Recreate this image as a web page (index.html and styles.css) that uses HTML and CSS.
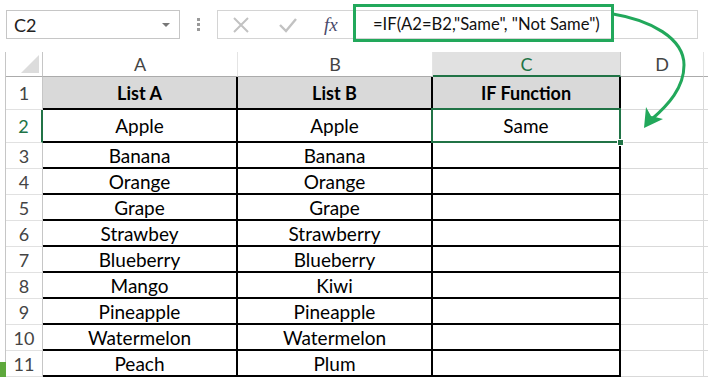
FILE: index.html
```html
<!DOCTYPE html>
<html lang="en">
<head>
  <meta charset="UTF-8">
  <title>IF Function</title>
  <link rel="stylesheet" href="styles.css">
</head>
<body>
  <div class="toolbar">
    <div class="name-box">
      <span>C2</span>
      <span class="drop"></span>
    </div>
    <div class="grip"><i></i><i></i><i></i></div>
    <div class="buttons">
      <svg class="btn" width="18" height="18" viewBox="0 0 18 18">
        <path d="M2 2 L16 16 M16 2 L2 16" stroke="#c2c2c2" stroke-width="2" fill="none"/>
      </svg>
      <svg class="btn" width="20" height="18" viewBox="0 0 20 18">
        <path d="M2 9 L8 15 L18 3" stroke="#c2c2c2" stroke-width="2.4" fill="none"/>
      </svg>
      <span class="fx">fx</span>
    </div>
    <div class="formula">=IF(A2=B2,"Same", "Not Same")</div>
  </div>

  <div class="sheet">
    <div class="cell corner"><span class="tri"></span></div>
    <div class="cell ch">A</div>
    <div class="cell ch">B</div>
    <div class="cell ch active">C</div>
    <div class="cell ch">D</div>
    <div class="cell ch last"></div>

    <div class="cell rh">1</div>
    <div class="cell t head">List A</div>
    <div class="cell t head">List B</div>
    <div class="cell t head">IF Function</div>
    <div class="cell"></div>
    <div class="cell last"></div>

    <div class="cell rh active">2</div>
    <div class="cell t">Apple</div>
    <div class="cell t">Apple</div>
    <div class="cell t selected">Same<span class="sel"><span class="handle"></span></span></div>
    <div class="cell"></div>
    <div class="cell last"></div>

    <div class="cell rh">3</div>
    <div class="cell t">Banana</div>
    <div class="cell t">Banana</div>
    <div class="cell t"></div>
    <div class="cell"></div>
    <div class="cell last"></div>

    <div class="cell rh">4</div>
    <div class="cell t">Orange</div>
    <div class="cell t">Orange</div>
    <div class="cell t"></div>
    <div class="cell"></div>
    <div class="cell last"></div>

    <div class="cell rh">5</div>
    <div class="cell t">Grape</div>
    <div class="cell t">Grape</div>
    <div class="cell t"></div>
    <div class="cell"></div>
    <div class="cell last"></div>

    <div class="cell rh">6</div>
    <div class="cell t">Strawbey</div>
    <div class="cell t">Strawberry</div>
    <div class="cell t"></div>
    <div class="cell"></div>
    <div class="cell last"></div>

    <div class="cell rh">7</div>
    <div class="cell t">Blueberry</div>
    <div class="cell t">Blueberry</div>
    <div class="cell t"></div>
    <div class="cell"></div>
    <div class="cell last"></div>

    <div class="cell rh">8</div>
    <div class="cell t">Mango</div>
    <div class="cell t">Kiwi</div>
    <div class="cell t"></div>
    <div class="cell"></div>
    <div class="cell last"></div>

    <div class="cell rh">9</div>
    <div class="cell t">Pineapple</div>
    <div class="cell t">Pineapple</div>
    <div class="cell t"></div>
    <div class="cell"></div>
    <div class="cell last"></div>

    <div class="cell rh">10</div>
    <div class="cell t">Watermelon</div>
    <div class="cell t">Watermelon</div>
    <div class="cell t"></div>
    <div class="cell"></div>
    <div class="cell last"></div>

    <div class="cell rh">11</div>
    <div class="cell t">Peach</div>
    <div class="cell t">Plum</div>
    <div class="cell t"></div>
    <div class="cell"></div>
    <div class="cell last"></div>
  </div>

  <!-- annotation: box round the formula and arrow to C2 -->
  <div class="callout"></div>
  <svg class="arrow" width="708" height="377" viewBox="0 0 708 377">
    <path d="M613 14 C650 20 684 38 684 65 C684 88 668 105 652 119" stroke="#22a85b" stroke-width="3" fill="none"/>
    <polygon points="644,128 646,107 651,116 663,119" fill="#22a85b"/>
  </svg>
  <div class="tab"></div>
</body>
</html>
```

FILE: styles.css
```css
* {
  box-sizing: border-box;
}

body {
  margin: 0;
  background: #fff;
  font-family: 'Lato', 'Open Sans', sans-serif;
  color: #000;
  overflow: hidden;
  position: relative;
  width: 708px;
  height: 377px;
}

/* formula bar */
.toolbar {
  display: flex;
  align-items: stretch;
  height: 29px;
  margin: 10px 0 13px 6px;
}

.name-box {
  width: 174px;
  border: 1px solid #c6c6c6;
  display: flex;
  align-items: center;
  justify-content: space-between;
  padding: 0 9px 0 7px;
  font-size: 18px;
  color: #222;
}

.drop {
  width: 0;
  height: 0;
  border-left: 4px solid transparent;
  border-right: 4px solid transparent;
  border-top: 4px solid #777;
}

.grip {
  width: 37px;
  display: flex;
  flex-direction: column;
  align-items: center;
  justify-content: center;
  gap: 2px;
}

.grip i {
  width: 3px;
  height: 3px;
  background: #9a9a9a;
}

.buttons {
  width: 138px;
  border: 1px solid #d4d4d4;
  border-right: none;
  display: flex;
  align-items: center;
  padding-left: 14px;
  gap: 28px;
}

.fx {
  font-family: 'Liberation Serif', serif;
  font-style: italic;
  font-size: 19px;
  color: #4a4a6a;
  margin-left: -2px;
}

.formula {
  width: 343px;
  border: 1px solid #d4d4d4;
  padding-left: 17px;
  font-size: 16.6px;
  line-height: 27px;
  color: #111;
  white-space: nowrap;
}

/* grid */
.sheet {
  display: grid;
  grid-template-columns: 37px 195px 195px 188px 83px 1fr;
  grid-template-rows: 25px 33px 33px repeat(9, 26px);
  margin-left: 5px;
  border-left: 1px solid #c6c6c6;
}

.cell {
  border-right: 1px solid #d9d9d9;
  border-bottom: 1px solid #d9d9d9;
  display: flex;
  align-items: center;
  justify-content: center;
  font-size: 19px;
  white-space: nowrap;
}

.cell.last {
  border-right: none;
}

.corner {
  position: relative;
  border-right-color: #c6c6c6;
  border-bottom-color: #ababab;
}

.tri {
  position: absolute;
  right: 3px;
  bottom: 3px;
  width: 0;
  height: 0;
  border-left: 18px solid transparent;
  border-bottom: 18px solid #dcdcdc;
}

.ch {
  font-size: 18px;
  color: #444;
  border-right-color: #e4e4e4;
  border-bottom-color: #ababab;
}

.ch.active {
  background: #e1e1e1;
  color: #217346;
  border-bottom: 2px solid #217346;
  border-right-color: #c6c6c6;
}

.rh {
  font-size: 18px;
  color: #444;
  border-right-color: #c6c6c6;
  border-bottom-color: #e1e1e1;
}

.rh.active {
  color: #217346;
  border-right: 2px solid #217346;
}

.t {
  border-right: 2px solid #000;
  border-bottom: 2px solid #000;
}

.head {
  background: #d9d9d9;
  font-weight: bold;
  font-size: 18px;
}

.selected {
  position: relative;
}

.sel {
  position: absolute;
  left: -2px;
  top: -2px;
  right: -2px;
  bottom: -2px;
  border: 2px solid #217346;
}

.handle {
  position: absolute;
  right: -5px;
  bottom: -5px;
  width: 7px;
  height: 7px;
  background: #217346;
  border: 1px solid #fff;
}

/* annotation */
.callout {
  position: absolute;
  left: 353px;
  top: 4px;
  width: 261px;
  height: 38px;
  border: 3px solid #22a85b;
}

.arrow {
  position: absolute;
  left: 0;
  top: 0;
}

.tab {
  position: absolute;
  left: 0;
  top: 362px;
  width: 6px;
  height: 15px;
  background: #5ea83c;
}
```
